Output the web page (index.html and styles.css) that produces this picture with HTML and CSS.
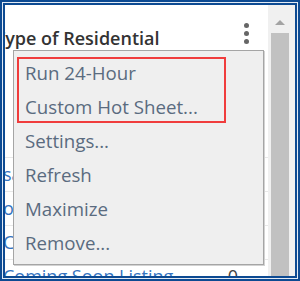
FILE: index.html
```html
<!DOCTYPE html>
<html>
<head>
<meta charset="utf-8">
<link rel="stylesheet" href="styles.css">
</head>
<body>
<div class="frame">
  <div class="panel">
    <div class="main">
      <div class="header">
        <h2 class="title">Type of Residential</h2>
        <span class="kebab"><i></i><i></i><i></i></span>
      </div>
      <div class="summary">Total Listings</div>
      <ul class="rows">
        <li><a>sale Pending</a><span>3</span></li>
        <li><a>open Houses</a><span>1</span></li>
        <li><a>Closed Listings</a><span>2</span></li>
        <li><a>Coming Soon Listing</a><span>0</span></li>
      </ul>
    </div>
    <div class="scrollbar">
      <span class="arrow"></span>
      <div class="thumb"></div>
    </div>
  </div>
  <ul class="menu">
    <li>Run 24-Hour</li>
    <li>Custom Hot Sheet...</li>
    <li>Settings...</li>
    <li>Refresh</li>
    <li>Maximize</li>
    <li>Remove...</li>
  </ul>
  <div class="callout"></div>
</div>
</body>
</html>
```
FILE: styles.css
```css
* { box-sizing: border-box; }
body { margin: 0; font-family: "Open Sans", "DejaVu Sans", sans-serif; }

.frame {
  position: relative;
  width: 300px;
  height: 281px;
  border: 2px solid #0d4a92;
  padding: 3px;
  background: #fff;
  box-shadow: inset 0 0 0 1px #e3ebf5, inset 0 0 0 3px #0d4a92;
  overflow: hidden;
}

.panel { display: flex; height: 100%; }

.main { flex: 1; min-width: 0; overflow: hidden; }

.header {
  display: flex;
  align-items: flex-start;
  height: 50px;
  padding-top: 16px;
}
.title {
  flex: 1;
  margin: 0 0 0 -10px;
  font-size: 18px;
  font-weight: 600;
  line-height: 34px;
  color: #333;
  white-space: nowrap;
}
.kebab {
  display: flex;
  flex-direction: column;
  gap: 3px;
  margin: 2px 19px 0 0;
}
.kebab i {
  display: block;
  width: 5px;
  height: 5px;
  border-radius: 50%;
  background: #666;
}

.summary {
  height: 102px;
  padding-left: 30px;
  font-size: 14px;
  color: #555;
}

.rows { list-style: none; margin: 0; padding: 0; }
.rows li {
  display: flex;
  justify-content: space-between;
  height: 34px;
  line-height: 32px;
  border-top: 1px solid #e8e8e8;
  padding-right: 30px;
  margin-left: -2px;
  font-size: 18px;
  white-space: nowrap;
}
.rows a { color: #3473c0; }
.rows span { color: #444; }

.scrollbar {
  width: 27px;
  background: #f0f0f0;
  display: flex;
  flex-direction: column;
  padding: 15px 6px 0 3px;
}
.arrow {
  align-self: center;
  width: 0;
  height: 0;
  border-left: 5px solid transparent;
  border-right: 5px solid transparent;
  border-bottom: 5px solid #a3a3a3;
}
.thumb {
  flex: 1;
  margin-top: 8px;
  background: #c1c1c1;
}

.menu {
  position: absolute;
  left: 11px;
  top: 48px;
  width: 251px;
  height: 215px;
  margin: 0;
  padding: 5px 0 0 11px;
  list-style: none;
  background: #efefef;
  border: 1px solid #a5a5a5;
  box-shadow: 1px 1px 0 #d2d2d2;
}
.menu li {
  font-size: 18.7px;
  line-height: 34px;
  color: #5a6b7f;
  white-space: nowrap;
}

.callout {
  position: absolute;
  left: 15px;
  top: 55px;
  width: 209px;
  height: 66px;
  border: 2px solid #f03c3c;
}
```
